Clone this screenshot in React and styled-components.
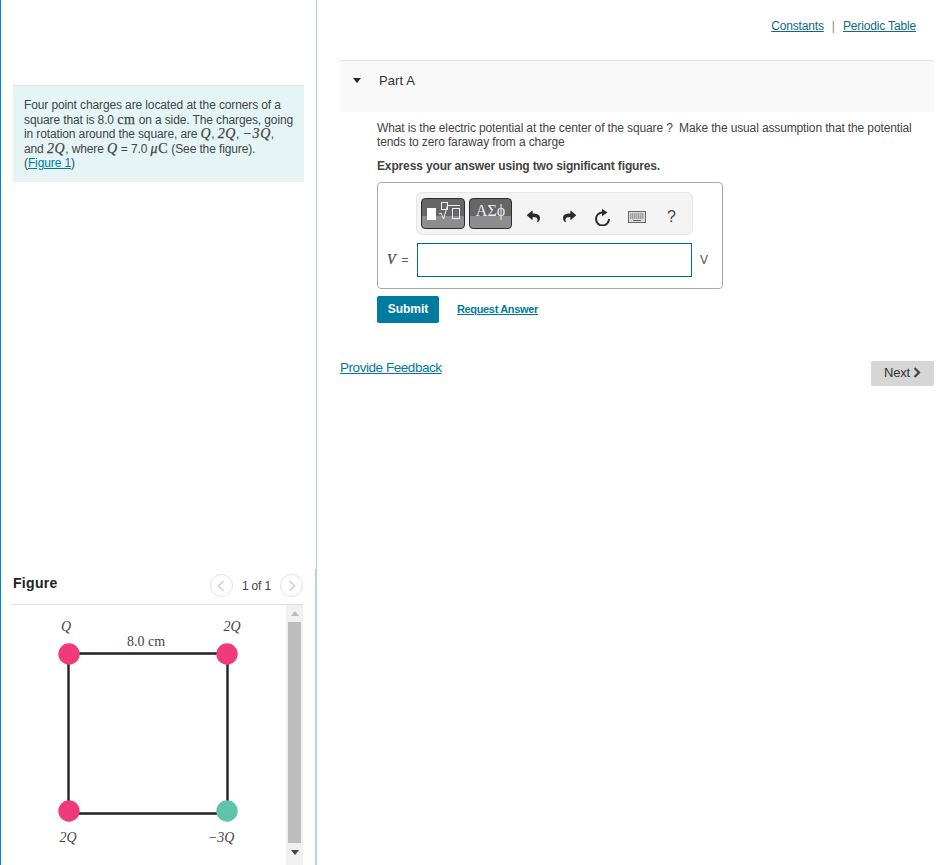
import React from 'react';
import styled, { createGlobalStyle } from 'styled-components';
import { FaReply, FaShare } from 'react-icons/fa';

const GlobalStyle = createGlobalStyle`
  html, body {
    margin: 0;
    padding: 0;
    background: #fff;
    overflow: hidden;
  }
  body {
    font-family: "Liberation Sans", Arial, sans-serif;
    font-size: 12px;
    color: #333;
  }
`;

const Page = styled.div`
  display: flex;
  height: 865px;
  width: 951px;
  overflow: hidden;
`;

const LeftPane = styled.div`
  box-sizing: border-box;
  width: 317px;
  flex: none;
  height: 865px;
  display: flex;
  flex-direction: column;
  border-left: 1px solid #0a7fd6;
  border-right: 1px solid #b8cfe6;
  padding-top: 85px;
`;

const InfoBox = styled.div`
  box-sizing: border-box;
  margin-left: 12px;
  width: 291px;
  height: 97px;
  padding: 12px 8px 0 11px;
  background: #e5f5f6;
  border-top: 1px solid #d9e6e8;
  font-size: 12px;
  line-height: 14.5px;
  letter-spacing: -0.12px;
  color: #444;
`;

const M = styled.span`
  font-family: "Liberation Serif", serif;
  font-size: 14px;
  font-style: ${(p) => (p.$upright ? 'normal' : 'italic')};
  font-weight: 400;
  color: #444;
  letter-spacing: 0.6px;
  -webkit-text-stroke: 0.25px #444;
`;

const Link = styled.a`
  color: ${(p) => p.$color || '#007b9f'};
  text-decoration: underline;
  font-size: ${(p) => p.$size || '12px'};
  font-weight: ${(p) => (p.$bold ? 700 : 400)};
  letter-spacing: ${(p) => p.$track || '-0.12px'};
  cursor: pointer;
`;

const RequestLink = styled(Link)`
  margin-bottom: 2px;
`;

const FeedbackLink = styled(Link)`
  margin-top: -1px;
`;

const FigurePane = styled.div`
  box-sizing: border-box;
  margin-top: auto;
  height: 296px;
  padding-left: 12px;
  border-right: 1px solid #b8cfe6;
`;

const FigureSection = styled.div`
  width: 290px;
`;

const FigureHead = styled.div`
  box-sizing: border-box;
  display: flex;
  align-items: center;
  justify-content: space-between;
  height: 36px;
  border-bottom: 1px solid #dcdfe3;
`;

const FigureTitle = styled.div`
  font-size: 14px;
  font-weight: 700;
  color: #222;
  letter-spacing: 0.3px;
  margin-top: -7px;
`;

const Pager = styled.div`
  display: flex;
  align-items: center;
  gap: 9px;
  margin-top: -2px;
  font-size: 12px;
  letter-spacing: -0.15px;
  color: #444;
`;

const PagerButton = styled.span`
  box-sizing: border-box;
  width: 23px;
  height: 23px;
  border: 1px solid #e2e2e2;
  border-radius: 50%;
  display: flex;
  align-items: center;
  justify-content: center;
`;

const FigureBody = styled.div`
  display: flex;
  height: 260px;
`;

const FigureCanvas = styled.div`
  flex: 1;
`;

const Scrollbar = styled.div`
  width: 17px;
  background: #f1f1f1;
  display: flex;
  flex-direction: column;
  align-items: center;
`;

const ScrollArrow = styled.div`
  box-sizing: border-box;
  height: ${(p) => p.$h}px;
  padding-bottom: ${(p) => p.$h - 17 > 0 ? 4 : 0}px;
  display: flex;
  align-items: center;
  justify-content: center;
  width: 100%;
`;

const ScrollThumb = styled.div`
  width: 13px;
  flex: 1;
  background: #bdbdbd;
`;

const RightPane = styled.div`
  flex: 1;
  display: flex;
  flex-direction: column;
  padding: 0 17px 0 23px;
`;

const TopLinks = styled.div`
  display: flex;
  justify-content: flex-end;
  align-items: center;
  gap: 8px;
  height: 60px;
  padding: 0 18px 8px 0;
  box-sizing: border-box;
  color: #888;
`;

const PartHeader = styled.div`
  box-sizing: border-box;
  height: 52px;
  background: #f9f9f9;
  border-top: 1px solid #e2e2e2;
  display: flex;
  align-items: flex-start;
  padding: 12px 0 0 13px;
  gap: 18px;
  font-size: 13px;
  line-height: 15px;
  letter-spacing: 0.1px;
  color: #333;
`;

const Caret = styled.span`
  width: 0;
  height: 0;
  margin-top: 5px;
  border-left: 4.5px solid transparent;
  border-right: 4.5px solid transparent;
  border-top: 5px solid #222;
`;

const Question = styled.div`
  padding: 9px 0 0 37px;
`;

const Prompt = styled.p`
  margin: 0;
  font-size: 12px;
  line-height: 14px;
  letter-spacing: -0.13px;
  white-space: pre-wrap;
  color: #444;
  width: 545px;
`;

const Instruction = styled.p`
  margin: 10px 0 0;
  font-size: 12px;
  line-height: 14px;
  font-weight: 700;
  letter-spacing: -0.14px;
  color: #444;
`;

const AnswerBox = styled.div`
  box-sizing: border-box;
  margin-top: 9px;
  width: 346px;
  height: 107px;
  border: 1px solid #aaa;
  border-radius: 4px;
  padding: 9px 0 0 9px;
`;

const Toolbar = styled.div`
  box-sizing: border-box;
  margin-left: 29px;
  width: 277px;
  height: 43px;
  background: #f4f4f4;
  border: 1px solid #e6e6e6;
  border-radius: 6px;
  display: flex;
  align-items: center;
  padding-left: 4px;
`;

const MathButton = styled.div`
  box-sizing: border-box;
  width: ${(p) => p.$w}px;
  height: 31px;
  margin-right: 4px;
  border: 1px solid #2e2e2e;
  border-radius: 4px;
  background: linear-gradient(#666 0, #666 57%, #8d8d8f 57%, #8d8d8f 100%);
  color: #eee;
  display: flex;
  align-items: center;
  justify-content: center;
  font-family: "Liberation Serif", serif;
  font-size: 16px;
  padding-bottom: 6px;
`;

const RadicalSlot = styled(MathButton)`
  padding: 0;
`;

const ToolIcon = styled.div`
  box-sizing: border-box;
  width: ${(p) => p.$w}px;
  flex: none;
  display: flex;
  justify-content: center;
  align-items: center;
  padding-top: 6px;
  color: #2b2b2b;
  font-size: ${(p) => p.$size || 14}px;
`;

const HelpMark = styled(ToolIcon)`
  color: #444;
`;

const InputRow = styled.div`
  display: flex;
  align-items: center;
  margin-top: 8px;
`;

const VarLabel = styled.div`
  width: 30px;
  font-size: 12px;
  word-spacing: 2px;
  color: #555;
  white-space: nowrap;
`;

const ValueInput = styled.div`
  box-sizing: border-box;
  width: 275px;
  height: 34px;
  border: 1px solid #00708f;
  background: #fff;
`;

const Unit = styled.div`
  margin-left: 8px;
  font-size: 12px;
  color: #555;
`;

const Actions = styled.div`
  display: flex;
  align-items: center;
  gap: 18px;
  margin-top: 7px;
`;

const SubmitButton = styled.div`
  box-sizing: border-box;
  width: 62px;
  height: 27px;
  background: #007b9f;
  border-radius: 2px;
  color: #fff;
  font-size: 12px;
  font-weight: 700;
  display: flex;
  align-items: center;
  justify-content: center;
  padding-bottom: 2px;
`;

const Footer = styled.div`
  display: flex;
  justify-content: space-between;
  align-items: flex-start;
  margin-top: 38px;
`;

const NextButton = styled.div`
  box-sizing: border-box;
  width: 63px;
  height: 25px;
  padding-bottom: 2px;
  background: #d6d6d6;
  border-radius: 2px;
  display: flex;
  align-items: center;
  justify-content: center;
  gap: 3px;
  font-size: 13px;
  letter-spacing: -0.2px;
  color: #333;
`;

const serif = '"Liberation Serif", serif';

const RadicalIcon = () => (
  <svg width="42" height="29" viewBox="0 0 42 29">
    <rect x="5" y="9" width="9" height="12" fill="#fff" />
    <rect x="19.500" y="3.500" width="6" height="7" fill="none" stroke="#eee" />
    <path d="M17 15l2 -1l2.500 6l4 -13.500h12.500" fill="none" stroke="#eee" />
    <rect x="30.500" y="9.500" width="7" height="10" fill="none" stroke="#eee" />
  </svg>
);

const ResetIcon = () => (
  <svg width="16" height="18" viewBox="0 0 16 18">
    <path d="M14 11A6.500 6.500 0 1 1 7.500 4.500" fill="none" stroke="#2b2b2b" strokeWidth="2" />
    <path d="M7 0.800L12.500 4.500L7 8.200z" fill="#2b2b2b" />
  </svg>
);

const KeyboardIcon = () => (
  <svg width="18" height="12" viewBox="0 0 18 12">
    <rect x="0.500" y="0.500" width="17" height="11" fill="#ddd" stroke="#666" />
    <path d="M2 3h14M2 5h14M2 7h14" stroke="#666" strokeDasharray="1.500 0.500" />
    <path d="M5 9.500h8" stroke="#666" />
  </svg>
);

const PagerChevron = ({ flip }) => (
  <svg width="8" height="12" viewBox="0 0 8 12" style={flip ? { transform: 'scaleX(-1)' } : undefined}>
    <path d="M6.500 1l-5 5l5 5" fill="none" stroke="#cfcfcf" strokeWidth="1.600" />
  </svg>
);

const Diagram = () => (
  <svg width="273" height="260" viewBox="0 0 273 260">
    <path d="M55.500 48.500H214.500M55.500 48.500V208.500M214.500 48.500V208.500M55.500 208.500H214.500" fill="none" stroke="#222" strokeWidth="2.400" />
    <circle cx="56" cy="49" r="10.700" fill="#f23a7a" />
    <circle cx="214" cy="49" r="10.700" fill="#f23a7a" />
    <circle cx="56" cy="206" r="10.700" fill="#f23a7a" />
    <circle cx="214" cy="206" r="10.700" fill="#5fc4aa" />
    <g fontFamily={serif} fontSize="14" fill="#444">
      <text x="53" y="26" fontStyle="italic" textAnchor="middle">Q</text>
      <text x="219" y="26" fontStyle="italic" textAnchor="middle">2Q</text>
      <text x="133" y="41" textAnchor="middle">8.0 cm</text>
      <text x="55" y="237" fontStyle="italic" textAnchor="middle">2Q</text>
      <text x="208" y="237" fontStyle="italic" textAnchor="middle">−3Q</text>
    </g>
  </svg>
);

function App() {
  return (
    <Page>
      <GlobalStyle />
      <LeftPane>
        <InfoBox>
          Four point charges are located at the corners of a square that is 8.0 <M $upright>cm</M> on a side. The charges, going in rotation around the square, are <M>Q</M>, <M>2Q</M>, <M>−3Q</M>,<br />and <M>2Q</M>, where <M>Q</M> = 7.0 <M>μ</M><M $upright>C</M> (See the figure).<br />(<Link>Figure 1</Link>)
        </InfoBox>
        <FigurePane>
          <FigureSection>
            <FigureHead>
              <FigureTitle>Figure</FigureTitle>
              <Pager>
                <PagerButton><PagerChevron /></PagerButton>
                <span>1 of 1</span>
                <PagerButton><PagerChevron flip /></PagerButton>
              </Pager>
            </FigureHead>
            <FigureBody>
              <FigureCanvas><Diagram /></FigureCanvas>
              <Scrollbar>
                <ScrollArrow $h={17}>
                  <svg width="8" height="5" viewBox="0 0 8 5"><path d="M4 0l4 5H0z" fill="#bbb" /></svg>
                </ScrollArrow>
                <ScrollThumb />
                <ScrollArrow $h={22}>
                  <svg width="8" height="5" viewBox="0 0 8 5"><path d="M0 0h8L4 5z" fill="#444" /></svg>
                </ScrollArrow>
              </Scrollbar>
            </FigureBody>
          </FigureSection>
        </FigurePane>
      </LeftPane>
      <RightPane>
        <TopLinks>
          <Link $color="#0b6b85" $track="-0.15px">Constants</Link>
          <span>|</span>
          <Link $color="#0b6b85" $track="-0.15px">Periodic Table</Link>
        </TopLinks>
        <PartHeader>
          <Caret />
          <span>Part A</span>
        </PartHeader>
        <Question>
          <Prompt>{'What is the electric potential at the center of the square ?  Make the usual assumption that the potential tends to zero faraway from a charge'}</Prompt>
          <Instruction>Express your answer using two significant figures.</Instruction>
          <AnswerBox>
            <Toolbar>
              <RadicalSlot $w={44}><RadicalIcon /></RadicalSlot>
              <MathButton $w={43}>ΑΣϕ</MathButton>
              <ToolIcon $w={35} $size={13}><FaReply /></ToolIcon>
              <ToolIcon $w={36} $size={13}><FaShare /></ToolIcon>
              <ToolIcon $w={31}><ResetIcon /></ToolIcon>
              <ToolIcon $w={38}><KeyboardIcon /></ToolIcon>
              <HelpMark $w={31} $size={16}>?</HelpMark>
            </Toolbar>
            <InputRow>
              <VarLabel><M>V</M> =</VarLabel>
              <ValueInput />
              <Unit>V</Unit>
            </InputRow>
          </AnswerBox>
          <Actions>
            <SubmitButton>Submit</SubmitButton>
            <RequestLink $bold $size="11px" $track="-0.35px">Request Answer</RequestLink>
          </Actions>
        </Question>
        <Footer>
          <FeedbackLink $size="13.5px" $track="-0.45px">Provide Feedback</FeedbackLink>
          <NextButton>
            Next
            <svg width="8" height="11" viewBox="0 0 8 11"><path d="M1.500 1l4.500 4.500l-4.500 4.500" fill="none" stroke="#444" strokeWidth="2.200" /></svg>
          </NextButton>
        </Footer>
      </RightPane>
    </Page>
  );
}

export default App;
